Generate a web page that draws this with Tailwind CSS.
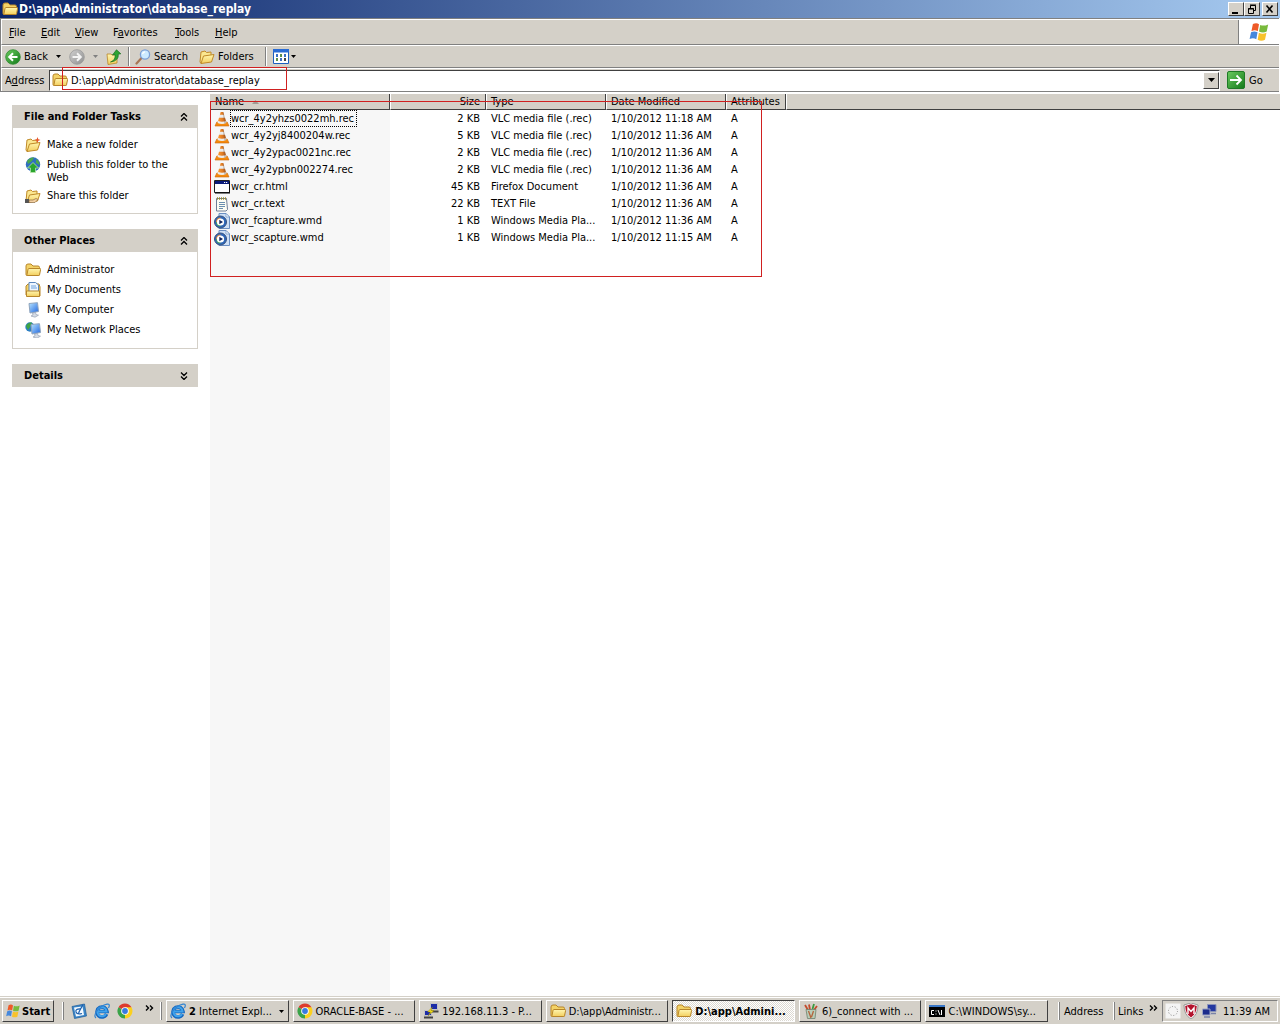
<!DOCTYPE html>
<html lang="en">
<head>
  <meta charset="UTF-8">
  <meta name="viewport" content="width=device-width, initial-scale=1.0">
  <title>D:\app\Administrator\database_replay</title>
  <script src="https://cdn.jsdelivr.net/npm/@tailwindcss/browser@4"></script>
</head>
<body class="min-h-screen flex flex-col bg-white text-black text-[11px] leading-[13px] font-['Tahoma','DejaVu_Sans_Condensed','Noto_Sans',sans-serif]">

  <!-- Icon sprites -->
  <svg class="absolute size-0" aria-hidden="true">
    <defs>
      <linearGradient id="gFolder" x1="0" y1="0" x2="0" y2="1"><stop offset="0" stop-color="#fff6b0"/><stop offset="1" stop-color="#f3cf5e"/></linearGradient>
      <linearGradient id="gGreen" x1="0" y1="0" x2="1" y2="1"><stop offset="0" stop-color="#6ccb5f"/><stop offset="1" stop-color="#12791a"/></linearGradient>
      <linearGradient id="gGrey" x1="0" y1="0" x2="1" y2="1"><stop offset="0" stop-color="#d0d0d0"/><stop offset="1" stop-color="#8f8f8f"/></linearGradient>
      <linearGradient id="gScreen" x1="0" y1="0" x2="1" y2="1"><stop offset="0" stop-color="#b8e4ff"/><stop offset="1" stop-color="#1f66e0"/></linearGradient>
      <linearGradient id="gCone" x1="0" y1="0" x2="1" y2="0"><stop offset="0" stop-color="#ff9a2e"/><stop offset="1" stop-color="#c4621c"/></linearGradient>
    </defs>
    <symbol id="folder" viewBox="0 0 16 16">
      <path d="M1 12.500V4q0-2 2-2h3l2 2h5q1.500 0 1.500 1.500V12.500q0 1-1 1H2q-1 0-1-1z" fill="#f3d267" stroke="#b8862a"/>
      <path d="M4 6.500h11q.8 0 .6 1l-1 5q-.2 1-1.200 1H2.800q-1 0-.8-1L3 7.500q.2-1 1-1z" fill="url(#gFolder)" stroke="#b8862a"/>
    </symbol>
    <symbol id="folder-open" viewBox="0 0 16 16">
      <path d="M1 13 2 3l4-1 1.500 1.500L12 3v4L2 14.500z" fill="#fbe78f" stroke="#c08a28"/>
      <path d="M4.500 7 15 5.500 12.500 13 2 14.500z" fill="url(#gFolder)" stroke="#c08a28"/>
    </symbol>
    <symbol id="cone" viewBox="0 0 16 16">
      <path d="M2.800 11h10.400l1.800 4H1z" fill="#f58a0c" stroke="#c9660a" stroke-width=".6"/>
      <path d="M6.700 1h2.600L12.500 12q-4.500 2-9 0z" fill="#ececec"/>
      <path d="M6.700 1h2.600l.8 2.800H5.900zM5 6.800h6l.9 3.200q-3.900 1.500-7.800 0z" fill="url(#gCone)"/>
      <path d="M9.300 1 12.500 12q-1 .6-2.200.8L8.600 1z" fill="#6c4830" opacity=".3"/>
    </symbol>
    <symbol id="wmd" viewBox="0 0 16 16">
      <path d="M5 .5h7L15.500 4v11.500H5z" fill="#cfe0f5" stroke="#6b8fc2"/>
      <path d="M12 .5V4h3.500z" fill="#fff" stroke="#6b8fc2" stroke-width=".7"/>
      <circle cx="6.500" cy="9" r="6" fill="#2e67b8" stroke="#37507c"/>
      <path d="M6.500 4.500A4.500 4.500 0 0 0 2 9h4.500z" fill="#e08a3c"/>
      <path d="M6.500 13.500A4.500 4.500 0 0 1 2 9h4.500z" fill="#46a45a"/>
      <circle cx="6.500" cy="9" r="3.600" fill="#fff"/>
      <path d="M5.300 6.800 9 9l-3.700 2.200z" fill="#10245c"/>
    </symbol>
    <symbol id="chrome" viewBox="0 0 16 16">
      <path d="M8 8 1.500 4.200A7.500 7.500 0 0 1 14.500 4.300z" fill="#dd3b2d"/>
      <path d="M8 8V4.300h6.500A7.500 7.500 0 0 1 8 15.500z" fill="#fbd01e"/>
      <path d="M8 8 8 15.500A7.500 7.500 0 0 1 1.500 4.200z" fill="#3aa348"/>
      <circle cx="8" cy="8" r="3.800" fill="#fff"/>
      <circle cx="8" cy="8" r="2.900" fill="#3a7be0"/>
    </symbol>
    <symbol id="ie" viewBox="0 0 16 16">
      <path d="M12.600 11A5 5 0 1 1 13 8.500H4.500" fill="none" stroke="#1768bf" stroke-width="3.600"/>
      <path d="M12 11A4.600 4.600 0 1 1 12.600 8.500H4.500" fill="none" stroke="#3fa3ec" stroke-width="2"/>
      <path d="M2 15C-1.500 12 5 3 13 1.200c3-.6 2.500 2 1.500 3.800" fill="none" stroke="#2f83d2" stroke-width="1.200"/>
    </symbol>
    <symbol id="flag" viewBox="0 0 18 18">
      <path d="M4 2.500q3-1.500 5 .2L8 8.300q-2.500-1.500-5.200 0z" fill="#ee5a28"/>
      <path d="M10 3.200q3 1.300 6.500-.4l-1.200 5.800q-3 1.500-6.300 0z" fill="#79ba3c"/>
      <path d="M2.500 9.300q2.700-1.500 5.300 0L6.800 15q-2.500-1.700-5.500-.2z" fill="#4588dc"/>
      <path d="M8.900 9.700q3 1.400 6.200 0l-1.200 5.700q-3 1.500-6 0z" fill="#f8c22c"/>
    </symbol>
    <symbol id="up2" viewBox="0 0 8 8"><path d="m1 3.500 3-3 3 3M1 7.500l3-3 3 3" fill="none" stroke="#000" stroke-width="1.300"/></symbol>
    <symbol id="down2" viewBox="0 0 8 8"><path d="m1 .5 3 3 3-3M1 4.500l3 3 3-3" fill="none" stroke="#000" stroke-width="1.300"/></symbol>
    <symbol id="more" viewBox="0 0 9 6"><path d="m1 .5 2.500 2.500L1 5.500M5 .5 7.500 3 5 5.500" fill="none" stroke="#000" stroke-width="1.400"/></symbol>
    <symbol id="caret" viewBox="0 0 5 3"><path d="M0 0h5L2.500 3z"/></symbol>
    <symbol id="monitor" viewBox="0 0 16 16">
      <path d="m4 1.500 8.500-.8 1 8.800L5 11z" fill="url(#gScreen)" stroke="#8fa4bd"/>
      <path d="m7.500 11 3-.5.500 2 2.500.7-3.500 2-4-1.200 2-1z" fill="#d5dce6" stroke="#8d99ab" stroke-width=".6"/>
    </symbol>
  </svg>

  <!-- Title bar -->
  <header class="h-[18px] flex items-center bg-linear-to-r/srgb from-[#0a246a] to-[#a6caf0] pl-[2px] pr-[2px]">
    <svg class="size-4"><use href="#folder"/></svg>
    <h1 class="flex-1 pl-px text-white text-xs font-bold">D:\app\Administrator\database_replay</h1>
    <div class="flex h-[14px]">
      <button aria-label="Minimize" class="w-4 bg-[#d4d0c8] border border-t-white border-l-white border-r-[#404040] border-b-[#404040]"><svg class="size-3" viewBox="0 0 12 12"><path d="M3 9h6v2H3z"/></svg></button>
      <button aria-label="Restore" class="w-4 bg-[#d4d0c8] border border-t-white border-l-white border-r-[#404040] border-b-[#404040]"><svg class="size-3" viewBox="0 0 12 12"><path d="M5.500 5V2.500h5v5H8M5 2h6" fill="none" stroke="#000"/><path d="M3.500 5.500h5v5h-5zM3 6h6" fill="none" stroke="#000"/></svg></button>
      <button aria-label="Close" class="w-4 ml-[2px] bg-[#d4d0c8] border border-t-white border-l-white border-r-[#404040] border-b-[#404040]"><svg class="size-3" viewBox="0 0 12 12"><path d="m3.500 2.500 6 7m0-7-6 7" stroke="#000" stroke-width="1.600"/></svg></button>
    </div>
  </header>

  <!-- Menu, toolbar and address bar -->
  <div class="relative bg-[#d4d0c8] border-t border-l border-[#808080] border-b mr-px">
    <nav class="h-[26px] flex border-t border-l border-white border-b border-b-[#808080]">
      <ul class="flex-1 flex items-center pl-[7px] border-r border-[#808080]">
        <li class="w-8"><a href="#"><u>F</u>ile</a></li>
        <li class="w-[34px]"><a href="#"><u>E</u>dit</a></li>
        <li class="w-[38px]"><a href="#"><u>V</u>iew</a></li>
        <li class="w-[62px]"><a href="#">F<u>a</u>vorites</a></li>
        <li class="w-10"><a href="#"><u>T</u>ools</a></li>
        <li><a href="#"><u>H</u>elp</a></li>
      </ul>
      <div class="w-10 bg-white flex items-center justify-center"><svg class="size-[22px]"><use href="#flag"/></svg></div>
    </nav>

    <div class="h-[23px] flex items-center pl-[3px] border-t border-l border-white border-b border-b-[#808080]">
      <button class="flex items-center w-16">
        <svg class="size-4" viewBox="0 0 16 16"><circle cx="8" cy="8" r="7.300" fill="url(#gGreen)" stroke="#2f8a30" stroke-width=".8"/><path d="M12.500 8H4.500M8 4.200 4.200 8 8 11.800" fill="none" stroke="#fff" stroke-width="2"/></svg>
        <span class="pl-[3px] flex-1 text-left">Back</span>
        <svg class="w-[5px] h-[3px] mr-2"><use href="#caret"/></svg>
      </button>
      <button aria-label="Forward" class="flex items-center w-[37px]">
        <svg class="size-4" viewBox="0 0 16 16"><circle cx="8" cy="8" r="7.300" fill="url(#gGrey)" stroke="#999" stroke-width=".8"/><path d="M3.500 8h8M8 4.200 11.800 8 8 11.800" fill="none" stroke="#f4f4f4" stroke-width="2"/></svg>
        <svg class="w-[5px] h-[3px] ml-2 fill-[#808080]"><use href="#caret"/></svg>
      </button>
      <button aria-label="Up" class="w-[22px]"><svg class="size-4" viewBox="0 0 16 16"><path d="M1 5h4l1 1h5v8l-9 1.500z" fill="url(#gFolder)" stroke="#b8862a" stroke-width=".8"/><path d="M4.500 13Q10 11 9 5.500L6.500 6 10.500.8l4.300 4-2.500.3Q13 12 4.500 13z" fill="#2fa532" stroke="#146f1c" stroke-width=".7"/></svg></button>
      <span class="h-[19px] w-0.5 border-l border-l-[#808080] border-r border-r-white"></span>
      <button class="flex items-center w-16 pl-[5px]">
        <svg class="size-4" viewBox="0 0 16 16"><path d="m6.500 9-5 5.500" stroke="#a87554" stroke-width="2.200" stroke-linecap="round"/><circle cx="10" cy="5.500" r="4.600" fill="#cdeaff" stroke="#7b9fd6" stroke-width="1.300"/><path d="M7.500 5Q8 3 10 2.800" stroke="#fff" stroke-width="1.300" fill="none"/></svg>
        <span class="pl-[3px]">Search</span>
      </button>
      <button class="flex items-center w-[71px] pl-[5px]">
        <svg class="size-4"><use href="#folder-open"/></svg>
        <span class="pl-[3px]">Folders</span>
      </button>
      <span class="h-[19px] w-0.5 border-l border-l-[#808080] border-r border-r-white"></span>
      <button aria-label="Views" class="flex items-center pl-[6px] gap-[2px]">
        <svg class="w-4 h-[15px]" viewBox="0 0 16 15"><path d="M.5.5h15v14H.5z" fill="#fff" stroke="#1c5fc0"/><path d="M0 0h16v3.500H0z" fill="#2a6bd4"/><path d="M3 5h2v3H3zM11 5h2v3h-2zM7 9h2v3H7z" fill="#3b6fc4"/><path d="M7 5h2v3H7zM3 9h2v3H3z" fill="#5d8f4e"/><path d="M11 9h2v3h-2z" fill="#444"/></svg>
        <svg class="w-[5px] h-[3px]"><use href="#caret"/></svg>
      </button>
    </div>

    <form class="h-[23px] flex items-center pl-[3px] border-t border-l border-white">
      <label for="address" class="w-11">A<u>d</u>dress</label>
      <div class="flex-1 flex items-center h-[21px] bg-white border border-t-[#404040] border-l-[#404040] border-b-white border-r-white pl-[2px]">
        <svg class="size-4"><use href="#folder"/></svg>
        <input id="address" type="text" value="D:\app\Administrator\database_replay" class="flex-1 pl-[3px] outline-none">
        <button type="button" aria-label="Show addresses" class="w-4 h-[17px] flex items-center justify-center bg-[#d4d0c8] border border-t-white border-l-white border-r-[#404040] border-b-[#404040]"><svg class="w-[7px] h-1" viewBox="0 0 7 4"><path d="M0 0h7L3.500 4z"/></svg></button>
      </div>
      <button type="button" class="flex items-center w-[59px] pl-[7px]">
        <svg class="size-[18px]" viewBox="0 0 18 18"><rect x=".5" y=".5" width="17" height="17" rx="1.500" fill="url(#gGreen)" stroke="#1f7a26"/><path d="M3 9h11M9.500 4.500 14 9l-4.500 4.500" fill="none" stroke="#fff" stroke-width="1.800"/></svg>
        <span class="pl-1">Go</span>
      </button>
    </form>
    <!-- marker round the path -->
    <div class="absolute left-[61px] top-[48px] w-[225px] h-[23px] border border-[#d02020] pointer-events-none"></div>
  </div>

  <div class="flex-1 flex pt-[2px]">
    <!-- Task pane -->
    <aside class="w-[210px] shrink-0 px-3 pt-[11px] flex flex-col gap-[15px]">
      <section>
        <h2 class="h-[23px] flex items-center justify-between bg-[#d4d0c8] pl-3 pr-[10px] font-bold">File and Folder Tasks <button aria-label="Collapse"><svg class="size-2"><use href="#up2"/></svg></button></h2>
        <ul class="border border-t-0 border-[#d4d0c8] pl-3 pr-5 pt-[9px] pb-[9px] flex flex-col gap-1">
          <li><a href="#" class="flex gap-[6px]"><svg class="size-4 shrink-0" viewBox="0 0 16 16"><use href="#folder-open"/><path d="m12.500 0 .8 2.200 2.200.8-2.200.8-.8 2.200-.8-2.200L9.500 3l2.200-.8z" fill="#e8552c"/></svg><span class="flex-1 pt-px">Make a new folder</span></a></li>
          <li><a href="#" class="flex gap-[6px]"><svg class="size-4 shrink-0" viewBox="0 0 16 16"><circle cx="8" cy="7.500" r="7.200" fill="#2f6fc0"/><path d="M2 4q3-4 7-3.500L7 4 3 7zm9-2q4 2 3.500 6L11 6z" fill="#4ba84c"/><path d="m8 5.500 5.500 5.500h-3v4.500h-5V11h-3z" fill="#2aa52e" stroke="#b6e6a8" stroke-width=".8"/></svg><span class="flex-1 pt-px">Publish this folder to the Web</span></a></li>
          <li><a href="#" class="flex gap-[6px]"><svg class="size-4 shrink-0" viewBox="0 0 16 16"><use href="#folder-open"/><path d="M0 11h4v4H0z" fill="#555"/><path d="M4 12h4l3-1.500 2 1-3 3H4z" fill="#f2cfa0" stroke="#7a5a34" stroke-width=".6"/></svg><span class="flex-1 pt-px">Share this folder</span></a></li>
        </ul>
      </section>
      <section>
        <h2 class="h-[23px] flex items-center justify-between bg-[#d4d0c8] pl-3 pr-[10px] font-bold">Other Places <button aria-label="Collapse"><svg class="size-2"><use href="#up2"/></svg></button></h2>
        <ul class="border border-t-0 border-[#d4d0c8] pl-3 pr-5 pt-[10px] pb-[10px] flex flex-col gap-1">
          <li><a href="#" class="flex gap-[6px]"><svg class="size-4 shrink-0"><use href="#folder"/></svg><span class="flex-1 pt-px">Administrator</span></a></li>
          <li><a href="#" class="flex gap-[6px]"><svg class="size-4 shrink-0" viewBox="0 0 16 16"><path d="M1 13V4l2-2h11l1 3v9H2z" fill="#f3d267" stroke="#b8862a"/><path d="M4 .5h6.500L13.500 3v8H4z" fill="#eef6ff" stroke="#5b87bd"/><path d="M6 4h5M6 6h6" stroke="#6fa2dc"/><path d="M1.500 9h13v5.500h-13z" fill="url(#gFolder)" stroke="#b8862a"/></svg><span class="flex-1 pt-px">My Documents</span></a></li>
          <li><a href="#" class="flex gap-[6px]"><svg class="size-4 shrink-0"><use href="#monitor"/></svg><span class="flex-1 pt-px">My Computer</span></a></li>
          <li><a href="#" class="flex gap-[6px]"><svg class="size-4 shrink-0" viewBox="0 0 16 16"><circle cx="5" cy="5" r="4.700" fill="#2d7fc4"/><path d="M1 4q2-4 6-3.500L5 5 3 8z" fill="#3fa444"/><use href="#monitor" x="2" y="1" width="16" height="16"/></svg><span class="flex-1 pt-px">My Network Places</span></a></li>
        </ul>
      </section>
      <section>
        <h2 class="h-[23px] flex items-center justify-between bg-[#d4d0c8] pl-3 pr-[10px] font-bold">Details <button aria-label="Expand"><svg class="size-2"><use href="#down2"/></svg></button></h2>
      </section>
    </aside>

    <!-- File list -->
    <main class="relative flex-1 bg-[linear-gradient(to_right,#f7f7f7_180px,white_180px)]">
      <table class="w-full table-fixed border-separate border-spacing-0">
        <colgroup><col class="w-[180px]"><col class="w-24"><col class="w-[120px]"><col class="w-[120px]"><col class="w-[60px]"><col></colgroup>
        <thead class="text-left bg-[#d4d0c8]">
          <tr class="h-4">
            <th class="font-normal pl-[5px] py-0 border-r border-b border-[#404040]"><div class="flex items-center gap-2">Name <svg class="w-[7px] h-1" viewBox="0 0 7 4"><path d="M3.500 0 7 4H0z" fill="#a09c94"/></svg></div></th>
            <th class="font-normal pr-[5px] py-0 text-right border-l border-l-white border-r border-b border-[#404040]">Size</th>
            <th class="font-normal pl-1 py-0 border-l border-l-white border-r border-b border-[#404040]">Type</th>
            <th class="font-normal pl-1 py-0 border-l border-l-white border-r border-b border-[#404040]">Date Modified</th>
            <th class="font-normal pl-1 py-0 border-l border-l-white border-r border-b border-[#404040]">Attributes</th>
            <td class="p-0 border-l border-l-white border-b border-b-[#404040]"></td>
          </tr>
        </thead>
        <tbody id="files"></tbody>
      </table>
      <!-- marker round the captured files -->
      <div class="absolute left-0 top-[7px] w-[552px] h-[176px] border border-[#d02020] pointer-events-none"></div>
    </main>
  </div>

  <!-- Taskbar -->
  <footer class="h-7 flex items-center bg-[#d4d0c8] border-t border-[#d4d0c8] shadow-[inset_0_1px_0_white] pl-[2px] pr-[2px] pt-px">
    <button class="w-[52px] h-[22px] flex items-center gap-px pl-[2px] font-bold border border-t-white border-l-white border-r-[#404040] border-b-[#404040]"><svg class="size-4"><use href="#flag"/></svg>Start</button>
    <div class="w-[112px] flex items-center">
      <span class="ml-2 mr-[7px] h-[18px] w-0.5 border-l border-l-white border-r border-r-[#808080]"></span>
      <button aria-label="Show Desktop"><svg class="size-4" viewBox="0 0 16 16"><path d="M1 3.500 13.500 1l2 12L3.500 15.500z" fill="#3b86c8" stroke="#1d5c99" stroke-width=".7"/><path d="m3 4.500 8.500-1L13 12l-8 1.500z" fill="#f4faff"/><path d="M12 1.500 8 9l-.5 2M10 6q-6-.5-5 3 1 3 6 1.500" stroke="#1b5fae" stroke-width="1.200" fill="none"/></svg></button>
      <button aria-label="Internet Explorer" class="ml-[7px]"><svg class="size-4"><use href="#ie"/></svg></button>
      <button aria-label="Chrome" class="ml-[7px]"><svg class="size-4"><use href="#chrome"/></svg></button>
      <button aria-label="More" class="ml-3 mb-[6px]"><svg class="w-[9px] h-[6px]"><use href="#more"/></svg></button>
      <span class="ml-[6px] h-[18px] w-0.5 shrink-0 border-l border-l-white border-r border-r-[#808080]"></span>
    </div>
    <div id="tasks" class="flex-1 flex gap-1 min-w-0"></div>
    <div class="flex items-center w-[114px]">
      <span class="ml-[10px] mr-1 h-[18px] w-0.5 border-l border-l-white border-r border-r-[#808080]"></span>
      <span class="w-[49px]">Address</span>
      <span class="mr-[3px] h-[18px] w-0.5 border-l border-l-white border-r border-r-[#808080]"></span>
      <span class="w-[31px]">Links</span>
      <button aria-label="More links" class="mb-[6px]"><svg class="w-[9px] h-[6px]"><use href="#more"/></svg></button>
    </div>
    <div class="flex items-center w-[116px] h-[22px] border border-t-[#808080] border-l-[#808080] border-r-white border-b-white pl-[2px] gap-[2px]">
      <svg class="size-4" viewBox="0 0 16 16"><path d="M.5.5h15v15H.5z" fill="#f4f4f4"/><circle cx="8" cy="8" r="4.500" fill="none" stroke="#888" stroke-dasharray="1 1.800"/></svg>
      <svg class="size-4" viewBox="0 0 16 16"><path d="m8 0 7 2q0 10-7 14Q1 12 1 2z" fill="#fff" stroke="#777" stroke-width=".7"/><path d="m8 1.300 5.800 1.700Q13.500 11 8 14.500 2.500 11 2.200 3z" fill="#b3122c"/><path d="M5 11V5l3 3.500L11 5v6" fill="none" stroke="#fff" stroke-width="1.400"/></svg>
      <svg class="size-4" viewBox="0 0 16 16"><path d="M6.500 1.500H15v7H6.500z" fill="#2438a0" stroke="#8b93b8"/><path d="M1.500 6H9v6H1.500z" fill="#1c2c8c" stroke="#9aa2c4"/><path d="M3 14h6M10 10.500h5" stroke="#7a83a8" stroke-width="1.600"/></svg>
      <time class="flex-1 text-right pr-[7px]">11:39 AM</time>
    </div>
  </footer>

  <template id="icon-cone"><svg class="size-4"><use href="#cone"/></svg></template>
  <template id="icon-html"><svg class="size-4" viewBox="0 0 16 16"><path d="M.5 1.500h15v12H.5z" fill="#fff" stroke="#222"/><path d="M1 2h14v3H1z" fill="#0a1a7a"/><path d="M10 3h1.200v1H10zM12 3h1.200v1H12z" fill="#fff"/><path d="M1 14h15V3" fill="none" stroke="#000"/></svg></template>
  <template id="icon-text"><svg class="size-4" viewBox="0 0 16 16"><path d="M2.500 2.500h10l1 11-1.500 1.500H2.500z" fill="#fdfdf4" stroke="#6f7f98"/><path d="M3 2.500h10" stroke="#9a8a30" stroke-width="2.400" stroke-dasharray="1 1"/><path d="M5 6.500h6M5 8.500h6M5 10.500h6M5 12.500h4" stroke="#6a8fb0"/></svg></template>
  <template id="icon-wmd"><svg class="size-4"><use href="#wmd"/></svg></template>
  <template id="icon-ie"><svg class="size-4 shrink-0"><use href="#ie"/></svg></template>
  <template id="icon-chrome"><svg class="size-4 shrink-0"><use href="#chrome"/></svg></template>
  <template id="icon-folder"><svg class="size-4 shrink-0"><use href="#folder"/></svg></template>
  <template id="icon-putty"><svg class="size-4 shrink-0" viewBox="0 0 16 16"><path d="M7.500.5h7v6h-7zM1.500 7.500h7v5h-7z" fill="#1c2ca8" stroke="#c5c5c5"/><path d="M7 8.500h8.500M1 14.500h9" stroke="#444" stroke-width="2"/><path d="m9.500 4-5 5h3l-2.500 4 6-5.500H8z" fill="#f5e01c" stroke="#8a7a00" stroke-width=".4"/></svg></template>
  <template id="icon-paint"><svg class="size-4 shrink-0" viewBox="0 0 16 16"><path d="m5 7-3-5M7 7 6 1.500M11 7l3-4" stroke="#c34b2c" stroke-width="1.800"/><path d="M9.500 6 11 1" stroke="#3b9a3e" stroke-width="1.800"/><path d="M3 6.500h10l-1 9H4.500z" fill="#b9cdb8" stroke="#6e806c" stroke-width=".8"/><path d="M5.500 8 8 15M10.500 8 8.500 14" stroke="#b4643c" stroke-width="1.300"/></svg></template>
  <template id="icon-cmd"><svg class="size-4 shrink-0" viewBox="0 0 16 16"><path d="M0 2h16v12H0z"/><path d="M0 2h16v2H0z" fill="#3a78c8"/><path d="M5 7.500H2.500v4H5M7 7.500v1m0 2v1M9 7l2 5M12.500 7v5" fill="none" stroke="#fff"/></svg></template>

  <script>
    const files = [
      ['cone', 'wcr_4y2yhzs0022mh.rec', '2 KB', 'VLC media file (.rec)', '1/10/2012 11:18 AM'],
      ['cone', 'wcr_4y2yj8400204w.rec', '5 KB', 'VLC media file (.rec)', '1/10/2012 11:36 AM'],
      ['cone', 'wcr_4y2ypac0021nc.rec', '2 KB', 'VLC media file (.rec)', '1/10/2012 11:36 AM'],
      ['cone', 'wcr_4y2ypbn002274.rec', '2 KB', 'VLC media file (.rec)', '1/10/2012 11:36 AM'],
      ['html', 'wcr_cr.html', '45 KB', 'Firefox Document', '1/10/2012 11:36 AM'],
      ['text', 'wcr_cr.text', '22 KB', 'TEXT File', '1/10/2012 11:36 AM'],
      ['wmd', 'wcr_fcapture.wmd', '1 KB', 'Windows Media Pla...', '1/10/2012 11:36 AM'],
      ['wmd', 'wcr_scapture.wmd', '1 KB', 'Windows Media Pla...', '1/10/2012 11:15 AM'],
    ];
    const icon = (name) => document.getElementById('icon-' + name).innerHTML;

    document.getElementById('files').innerHTML = files.map(([ic, name, size, type, date], i) => `
      <tr class="h-[17px] whitespace-nowrap">
        <td class="p-0 pl-1"><div class="flex items-center h-[17px]">${icon(ic)}<span class="${i === 0 ? 'leading-[17px] pl-px pr-[3px] outline-1 -outline-offset-1 outline-dotted outline-black' : 'leading-[17px] pl-px'}">${name}</span></div></td>
        <td class="p-0 pr-[6px] text-right">${size}</td>
        <td class="p-0 pl-[5px]">${type}</td>
        <td class="p-0 pl-[5px]">${date}</td>
        <td class="p-0 pl-[5px]">A</td>
        <td class="p-0"></td>
      </tr>`).join('');

    const tasks = [
      ['ie', '<b>2</b> Internet Expl...'],
      ['chrome', 'ORACLE-BASE - ...'],
      ['putty', '192.168.11.3 - P...'],
      ['folder', 'D:\\app\\Administr...'],
      ['folder', 'D:\\app\\Admini...'],
      ['paint', '6)_connect with ...'],
      ['cmd', 'C:\\WINDOWS\\sy...'],
    ];
    const raised = 'flex-1 h-[22px] flex items-center gap-[3px] pl-[3px] pr-1 whitespace-nowrap border border-t-white border-l-white border-r-[#404040] border-b-[#404040]';
    const pressed = 'flex-1 h-[22px] flex items-center gap-[3px] pl-[3px] pr-1 whitespace-nowrap font-bold bg-[repeating-conic-gradient(#ffffff_0_25%,#dcd9d2_0_50%)] bg-[length:2px_2px] border border-t-[#404040] border-l-[#404040] border-r-white border-b-white';
    document.getElementById('tasks').innerHTML = tasks.map(([ic, text], i) => `
      <button class="${i === 4 ? pressed : raised}">${icon(ic)}<span>${text}</span>${i === 0 ? '<svg class="w-[5px] h-[3px] ml-auto shrink-0"><use href="#caret"/></svg>' : ''}</button>`).join('');
  </script>
</body>
</html>
